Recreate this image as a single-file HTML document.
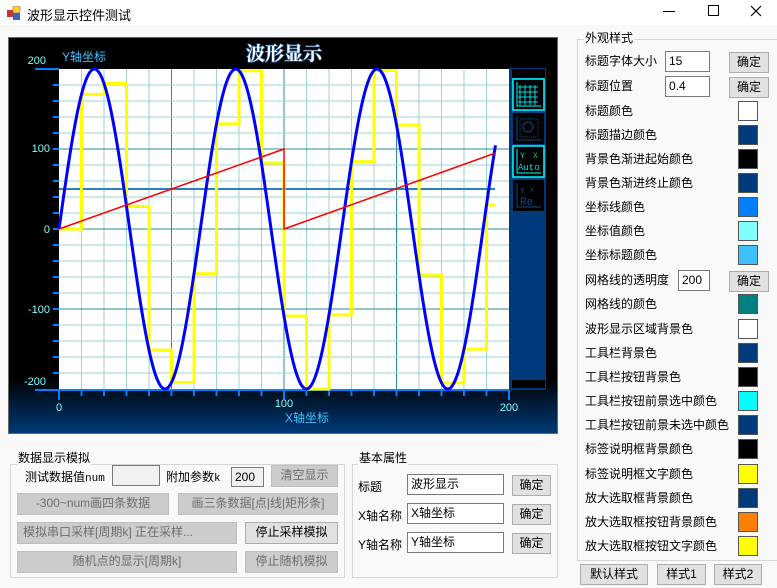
<!DOCTYPE html>
<html><head><meta charset="utf-8"><style>
*{box-sizing:border-box;margin:0;padding:0}
body{width:777px;height:588px;background:#f9f9f9;font-family:"Liberation Sans","Noto Sans CJK SC",sans-serif;font-size:12px;color:#000;position:relative;overflow:hidden}
.a{position:absolute;white-space:nowrap}
.tb{left:0;top:0;width:777px;height:25px;background:#fff}
.btn{position:absolute;background:#e1e1e1;border:1px solid #adadad;text-align:center;font-size:12px;line-height:19px}
.dis{background:#cccccc;border-color:#bfbfbf;color:#6d6d6d}
.inp{position:absolute;background:#fff;border:1px solid #7a7a7a;font-size:12px;line-height:18px;padding-left:3px}
.sw{position:absolute;width:20px;height:20px;border:1px solid #555;left:738px}
.grp{position:absolute;border:1px solid #d5d5d5}
.lg{position:absolute;background:#f9f9f9;padding:0 1px;font-size:12px;line-height:14px}
</style></head><body>
<div class="a tb"></div>
<svg class="a" style="left:7px;top:6px" width="14" height="14" viewBox="0 0 14 14"><rect x="0" y="4" width="7" height="7" fill="#c33"/><rect x="6" y="0" width="7" height="7" fill="#fc3" stroke="#666" stroke-width=".5"/><rect x="6" y="7" width="7" height="7" fill="#36c"/></svg>
<div class="a" style="left:27px;top:5px;font-size:13px">波形显示控件测试</div>
<div class="a" style="left:663px;top:11px;width:12px;height:1px;background:#000"></div>
<div class="a" style="left:708px;top:5px;width:11px;height:11px;border:1px solid #000"></div>
<svg class="a" style="left:750px;top:5px" width="12" height="12"><path d="M1 1L11 11M11 1L1 11" stroke="#000" stroke-width="1.2"/></svg>

<div class="a" style="left:8px;top:37px;width:550px;height:397px;border:1px solid #666;background:linear-gradient(#000 0%,#000 86%,#003a78 100%)"></div>
<svg id="ch" class="a" style="left:0;top:0" width="560" height="440"></svg>

<div class="grp" style="left:10px;top:464px;width:335px;height:114px"></div>
<div class="lg" style="left:17px;top:451px">数据显示模拟</div>
<div class="a" style="left:25px;top:468px">测试数据值<span style="font-family:'Liberation Mono';font-size:11px">num</span></div>
<div class="inp" style="left:112px;top:465px;width:48px;height:21px;background:#f0f0f0"></div>
<div class="a" style="left:166px;top:468px">附加参数<span style="font-family:'Liberation Mono';font-size:11px">k</span></div>
<div class="inp" style="left:231px;top:467px;width:33px;height:20px;background:#f0f0f0">200</div>
<div class="btn dis" style="left:271px;top:465px;width:67px;height:22px">清空显示</div>
<div class="btn dis" style="left:17px;top:493px;width:152px;height:22px">-300~num画四条数据</div>
<div class="btn dis" style="left:178px;top:493px;width:160px;height:22px">画三条数据[点|线|矩形条]</div>
<div class="btn dis" style="left:17px;top:522px;width:220px;height:22px;text-align:left;padding-left:5px">模拟串口采样[周期k] 正在采样...</div>
<div class="btn" style="left:245px;top:522px;width:93px;height:22px">停止采样模拟</div>
<div class="btn dis" style="left:17px;top:551px;width:220px;height:22px">随机点的显示[周期k]</div>
<div class="btn dis" style="left:245px;top:551px;width:93px;height:22px">停止随机模拟</div>

<div class="grp" style="left:352px;top:464px;width:206px;height:114px"></div>
<div class="lg" style="left:358px;top:451px">基本属性</div>
<div class="a" style="left:358px;top:478px">标题</div>
<div class="inp" style="left:407px;top:474px;width:97px;height:21px">波形显示</div>
<div class="btn" style="left:512px;top:475px;width:39px;height:21px">确定</div>
<div class="a" style="left:358px;top:507px">X轴名称</div>
<div class="inp" style="left:407px;top:503px;width:97px;height:21px">X轴坐标</div>
<div class="btn" style="left:512px;top:504px;width:39px;height:21px">确定</div>
<div class="a" style="left:358px;top:536px">Y轴名称</div>
<div class="inp" style="left:407px;top:532px;width:97px;height:21px">Y轴坐标</div>
<div class="btn" style="left:512px;top:533px;width:39px;height:21px">确定</div>

<div class="grp" style="left:577px;top:39px;width:201px;height:522px"></div>
<div class="lg" style="left:584px;top:31px">外观样式</div>
<div id="rp"></div>
<div class="btn" style="left:580px;top:564px;width:68px;height:21px">默认样式</div>
<div class="btn" style="left:657px;top:564px;width:49px;height:21px">样式1</div>
<div class="btn" style="left:714px;top:564px;width:48px;height:21px">样式2</div>

<script>
var rows=[["标题字体大小","i","15"],["标题位置","i","0.4"],["标题颜色","#fff"],["标题描边颜色","#003a7a"],["背景色渐进起始颜色","#000"],["背景色渐进终止颜色","#003a7a"],["坐标线颜色","#0080ff"],["坐标值颜色","#80ffff"],["坐标标题颜色","#40c0ff"],["网格线的透明度","j","200"],["网格线的颜色","#008080"],["波形显示区域背景色","#fff"],["工具栏背景色","#003a7a"],["工具栏按钮背景色","#000"],["工具栏按钮前景选中颜色","#0ff"],["工具栏按钮前景未选中颜色","#003a7a"],["标签说明框背景颜色","#000"],["标签说明框文字颜色","#ff0"],["放大选取框背景颜色","#003a7a"],["放大选取框按钮背景颜色","#ff8000"],["放大选取框按钮文字颜色","#ff0"]];
var h="";var ys=[61,86,111,135,159,183,207,231,255,280,304,329,353,377,401,425,449,474,498,522,546];
rows.forEach(function(r,i){var y=ys[i];h+='<div class="a" style="left:585px;top:'+(y-9)+'px">'+r[0]+'</div>';
if(r[1]=="i"){h+='<div class="inp" style="left:665px;top:'+(y-10)+'px;width:45px;height:21px">'+r[2]+'</div><div class="btn" style="left:729px;top:'+(y-9)+'px;width:40px;height:21px">确定</div>';}
else if(r[1]=="j"){h+='<div class="inp" style="left:678px;top:'+(y-10)+'px;width:32px;height:21px">'+r[2]+'</div><div class="btn" style="left:729px;top:'+(y-9)+'px;width:40px;height:21px">确定</div>';}
else h+='<div class="sw" style="top:'+(y-10)+'px;background:'+r[1]+'"></div>';});
document.getElementById("rp").innerHTML=h;

var s="";function X(u){return 59+u*2.25}function Y(v){return 229-v*0.8}
s+='<rect x="59" y="69" width="450" height="320" fill="#fff"/>';
for(var u=10;u<200;u+=10){var c=(u%50==0)?"#2a8f8f":"#9fd3d3";s+='<line x1="'+X(u)+'" y1="69" x2="'+X(u)+'" y2="389" stroke="'+c+'"/>'}
for(var v=-180;v<200;v+=20){var c=(v%100==0)?"#2a8f8f":"#9fd3d3";s+='<line x1="59" y1="'+Y(v)+'" x2="509" y2="'+Y(v)+'" stroke="'+c+'"/>'}
s+='<line x1="35" y1="'+Y(200)+'" x2="59" y2="'+Y(200)+'" stroke="#0080ff" stroke-width="2"/>';
s+='<line x1="35" y1="390" x2="509" y2="390" stroke="#0080ff" stroke-width="2"/>';
for(var v=-180;v<200;v+=20){s+='<line x1="53" y1="'+Y(v)+'" x2="59" y2="'+Y(v)+'" stroke="#0080ff" stroke-width="2"/>'}
for(var u=0;u<=200;u+=10){var l=(u%100==0)?10:6;s+='<line x1="'+X(u)+'" y1="390" x2="'+X(u)+'" y2="'+(390+l)+'" stroke="#0080ff" stroke-width="2"/>'}
var lbl='font-family="Liberation Sans" font-size="11" fill="#80ffff"';
s+='<text x="46" y="64" '+lbl+' text-anchor="end">200</text><text x="50" y="152" '+lbl+' text-anchor="end">100</text><text x="50" y="233" '+lbl+' text-anchor="end">0</text><text x="50" y="313" '+lbl+' text-anchor="end">-100</text><text x="46" y="385" '+lbl+' text-anchor="end">-200</text>';
s+='<text x="59" y="411" '+lbl+' text-anchor="middle">0</text><text x="284" y="407" '+lbl+' text-anchor="middle">100</text><text x="509" y="411" '+lbl+' text-anchor="middle">200</text>';
s+='<text x="62" y="61" font-family="Liberation Sans,Noto Sans CJK SC" font-size="12" fill="#40c0ff">Y轴坐标</text>';
s+='<text x="307" y="422" font-family="Liberation Sans,Noto Sans CJK SC" font-size="12" fill="#40c0ff" text-anchor="middle">X轴坐标</text>';
s+='<text x="284" y="60" font-family="Noto Serif CJK SC,Noto Sans CJK SC,serif" font-weight="bold" font-size="19" fill="#fff" stroke="#1a4f8a" stroke-width="1.5" paint-order="stroke" text-anchor="middle">波形显示</text>';
var p="";for(var u=0;u<=194;u+=0.5)p+=X(u)+","+Y(200*Math.sin(u/10))+" ";
var yl="";for(var n=0;n<=19;n++){var v=200*Math.sin(n);var x1=X(n*10),x2=Math.min(X(n*10+10),495);yl+=x1+","+Y(v)+" "+x2+","+Y(v)+" ";}
s+='<line x1="59" y1="'+Y(50)+'" x2="495" y2="'+Y(50)+'" stroke="#2a7fc0" stroke-width="2"/>';
s+='<polyline points="'+yl+'" fill="none" stroke="#ffff00" stroke-width="3"/>';
s+='<polyline points="'+p+'" fill="none" stroke="#0000ff" stroke-width="3"/>';
s+='<polyline points="'+X(0)+','+Y(0)+' '+X(100)+','+Y(100)+' '+X(100)+','+Y(0)+' '+X(194)+','+Y(95)+'" fill="none" stroke="#ff0000" stroke-width="1.5"/>';
s+='<rect x="509" y="68" width="37" height="322" fill="#003a7a"/><rect x="512" y="69" width="33" height="9" fill="#000"/><rect x="512" y="380" width="33" height="8" fill="#000"/>';
var bys=[79,113,146,180];
bys.forEach(function(b,i){var sel=(i==0||i==2);s+='<rect x="513" y="'+b+'" width="31" height="31" fill="#000" stroke="'+(sel?"#0ff":"none")+'" stroke-width="1.5"/>';
var c=sel?"#0ff":"#0a4a8a";s+='<path d="M517 '+(b+3)+'V'+(b+27)+'H541" stroke="'+c+'" fill="none"/>';
if(i==0){for(var k=0;k<4;k++){s+='<line x1="'+(520+k*5)+'" y1="'+(b+6)+'" x2="'+(520+k*5)+'" y2="'+(b+26)+'" stroke="#0dd" /><line x1="518" y1="'+(b+8+k*5)+'" x2="538" y2="'+(b+8+k*5)+'" stroke="#0dd"/>'}}
if(i==1){s+='<rect x="520" y="'+(b+6)+'" width="18" height="18" fill="none" stroke="'+c+'" stroke-dasharray="1,1"/><circle cx="528" cy="'+(b+14)+'" r="5" fill="none" stroke="'+c+'"/>'}
if(i==2){s+='<text x="520" y="'+(b+12)+'" font-size="8" font-family="Liberation Mono" fill="#0dd">Y</text><text x="533" y="'+(b+12)+'" font-size="8" font-family="Liberation Mono" fill="#0c8">X</text><text x="518" y="'+(b+24)+'" font-size="9" font-family="Liberation Mono" fill="#0dd">Auto</text>'}
if(i==3){s+='<text x="520" y="'+(b+12)+'" font-size="8" font-family="Liberation Mono" fill="'+c+'">y  x</text><text x="520" y="'+(b+25)+'" font-size="11" font-family="Liberation Mono" fill="'+c+'">Re</text>'}
});
document.getElementById("ch").innerHTML=s;
</script>
</body></html>
